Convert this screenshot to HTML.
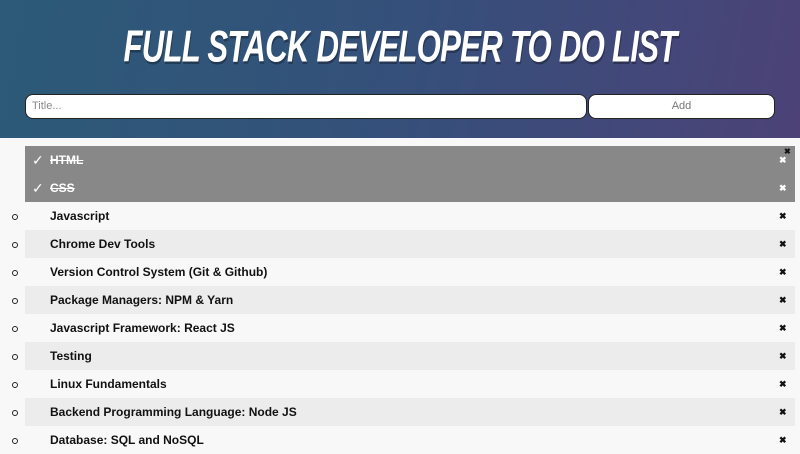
<!DOCTYPE html>
<html><head><style>
body{margin:0;width:800px;height:450px;overflow:hidden;background:#f8f8f8;font-family:"Liberation Sans",sans-serif}
.hd{height:138px;background:linear-gradient(100deg,#2c5a78 0%,#35507a 50%,#4c4278 100%);position:relative}
h1{margin:0;position:absolute;top:24px;left:0;width:800px;text-align:center;white-space:nowrap;color:#fff;font-family:"Liberation Sans",sans-serif;font-weight:bold;font-style:italic;font-size:40px;line-height:46px;letter-spacing:-1px;transform:scale(0.78,1.12);text-shadow:1px 2px 0 rgba(0,0,0,.3)}
.in{position:absolute;top:94px;left:25px;height:25px;background:#fff;border:1px solid #222;border-radius:8px;font-size:11px;color:#888;line-height:23px;padding-left:6px;box-sizing:border-box;width:562px}
.bt{position:absolute;top:94px;left:588px;width:187px;height:25px;background:#fff;border:1px solid #222;border-radius:8px;font-size:11px;color:#777;line-height:23px;text-align:center;box-sizing:border-box}
ul{margin:0;padding:0;list-style:none;position:absolute;top:146px;left:0;width:800px}
li{height:28px;line-height:28px;position:relative;font-size:12px;font-weight:bold;color:#111}
li .bg{position:absolute;left:25px;top:0;width:770px;height:28px}
li.alt .bg{background:#ececec}
li.done .bg{background:#888}
li span.t{position:absolute;left:50px}
li.done span.t{color:#fff;text-decoration:line-through}
li .x{position:absolute;left:779px;font-size:9px;color:#111}
li.done .x{color:#fff}
li .b{position:absolute;left:12px;top:12px;width:4px;height:4px;border:1px solid #222;border-radius:50%}
li .c{position:absolute;left:32px;top:0;color:#fff;font-size:14px;font-weight:normal}
</style></head><body>
<div class="hd"><h1>FULL STACK DEVELOPER TO DO LIST</h1>
<div class="in">Title...</div><div class="bt">Add</div></div>
<ul>
<li class="done"><div class="bg"></div><span class="c">✓</span><span class="t">HTML</span><span class="x">✖</span><span style="position:absolute;left:784px;top:-8px;font-size:8px">✖</span></li>
<li class="done"><div class="bg"></div><span class="c">✓</span><span class="t">CSS</span><span class="x">✖</span></li>
<li><div class="bg"></div><i class="b"></i><span class="t">Javascript</span><span class="x">✖</span></li>
<li class="alt"><div class="bg"></div><i class="b"></i><span class="t">Chrome Dev Tools</span><span class="x">✖</span></li>
<li><div class="bg"></div><i class="b"></i><span class="t">Version Control System (Git &amp; Github)</span><span class="x">✖</span></li>
<li class="alt"><div class="bg"></div><i class="b"></i><span class="t">Package Managers: NPM &amp; Yarn</span><span class="x">✖</span></li>
<li><div class="bg"></div><i class="b"></i><span class="t">Javascript Framework: React JS</span><span class="x">✖</span></li>
<li class="alt"><div class="bg"></div><i class="b"></i><span class="t">Testing</span><span class="x">✖</span></li>
<li><div class="bg"></div><i class="b"></i><span class="t">Linux Fundamentals</span><span class="x">✖</span></li>
<li class="alt"><div class="bg"></div><i class="b"></i><span class="t">Backend Programming Language: Node JS</span><span class="x">✖</span></li>
<li><div class="bg"></div><i class="b"></i><span class="t">Database: SQL and NoSQL</span><span class="x">✖</span></li>
</ul>
</body></html>
